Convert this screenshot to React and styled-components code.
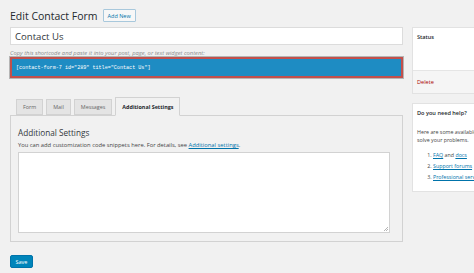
import styled, { createGlobalStyle } from 'styled-components';

const GlobalStyle = createGlobalStyle`
	html, body {
		margin: 0;
		padding: 0;
		background: #f1f1f1;
		overflow: hidden;
	}
	body {
		font-family: 'Open Sans', 'Noto Sans', sans-serif;
		color: #23282d;
	}
`;

const tabs = ['Form', 'Mail', 'Messages', 'Additional Settings'];

const App = () => {
	return (
		<Page>
			<GlobalStyle />
			<Header>
				<Title>Edit Contact Form</Title>
				<AddNew>Add New</AddNew>
			</Header>
			<Columns>
				<Main>
					<TitleInput>Contact Us</TitleInput>
					<Hint>Copy this shortcode and paste it into your post, page, or text widget content:</Hint>
					<Shortcode>[contact-form-7 id="289" title="Contact Us"]</Shortcode>
					<TabBar>
						{tabs.map((t, i) => (
							<Tab key={t} $active={i === tabs.length - 1}>{t}</Tab>
						))}
					</TabBar>
					<Panel>
						<PanelTitle>Additional Settings</PanelTitle>
						<PanelText>
							You can add customization code snippets here. For details, see <Link>Additional settings</Link>.
						</PanelText>
						<TextArea>
							<Grip />
						</TextArea>
					</Panel>
				</Main>
				<Side>
					<StatusBox>
						<BoxHead>Status</BoxHead>
						<BoxFoot>
							<Delete>Delete</Delete>
						</BoxFoot>
					</StatusBox>
					<HelpBox>
						<BoxHead>Do you need help?</BoxHead>
						<HelpText>Here are some available options to help solve your problems.</HelpText>
						<HelpList>
							<li><Link>FAQ</Link> and <Link>docs</Link></li>
							<li><Link>Support forums</Link></li>
							<li><Link>Professional services</Link></li>
						</HelpList>
					</HelpBox>
				</Side>
			</Columns>
			<SaveBtn>Save</SaveBtn>
		</Page>
	);
};

export default App;

const Page = styled.div`
	display: flex;
	flex-direction: column;
	width: 474px;
	height: 273px;
	padding: 8px 0 0 10px;
	box-sizing: border-box;
	overflow: hidden;
`;

const Header = styled.div`
	display: flex;
	align-items: center;
	gap: 5px;
	height: 15px;
`;

const Title = styled.h1`
	margin: 0;
	font-size: 10.5px;
	font-weight: 400;
	color: #23282d;
	white-space: nowrap;
`;

const AddNew = styled.span`
	display: inline-flex;
	align-items: center;
	height: 13px;
	box-sizing: border-box;
	padding: 0 4px;
	border: 1px solid #a8c8dc;
	border-radius: 1px;
	background: #f7f7f7;
	color: #0073aa;
	font-size: 5.5px;
`;

const Columns = styled.div`
	display: grid;
	grid-template-columns: 393px 160px;
	column-gap: 9px;
	margin-top: 4px;
`;

const Main = styled.div`
	display: flex;
	flex-direction: column;
`;

const TitleInput = styled.div`
	height: 18px;
	box-sizing: border-box;
	padding: 0 4px;
	display: flex;
	align-items: center;
	background: #fff;
	border: 1px solid #dcdcdc;
	font-size: 9.6px;
	color: #32373c;
`;

const Hint = styled.p`
	margin: 5px 0 0;
	height: 7px;
	line-height: 7px;
	font-size: 5.8px;
	font-style: italic;
	color: #8a8a8a;
	white-space: nowrap;
`;

const Shortcode = styled.div`
	height: 21px;
	box-sizing: border-box;
	display: flex;
	align-items: center;
	padding-left: 4px;
	background: #1e8cc3;
	border: 2px solid #c2504c;
	box-shadow: 0 0 0 1px #b5b5b5;
	color: #fff;
	font-family: 'Liberation Mono', monospace;
	font-size: 5.1px;
	white-space: nowrap;
`;

const TabBar = styled.div`
	display: flex;
	align-items: flex-end;
	gap: 3px;
	margin-top: 19px;
	padding-left: 6px;
	height: 18px;
	position: relative;
	z-index: 1;
`;

const Tab = styled.div`
	display: flex;
	align-items: center;
	padding: 0 6px;
	height: ${(p) => (p.$active ? '19px' : '16px')};
	box-sizing: border-box;
	margin-bottom: ${(p) => (p.$active ? '-1px' : '0')};
	background: ${(p) => (p.$active ? '#f1f1f1' : '#e4e4e4')};
	border: 1px solid #d2d2d2;
	border-bottom: ${(p) => (p.$active ? '1px solid #f1f1f1' : '1px solid #d2d2d2')};
	font-size: 5.4px;
	font-weight: ${(p) => (p.$active ? 700 : 400)};
	color: ${(p) => (p.$active ? '#23282d' : '#666')};
	white-space: nowrap;
`;

const Panel = styled.div`
	display: flex;
	flex-direction: column;
	height: 127px;
	box-sizing: border-box;
	padding: 11px 12px 8px 7px;
	border: 1px solid #d2d2d2;
	background: #f1f1f1;
`;

const PanelTitle = styled.h2`
	margin: 0;
	font-size: 8.2px;
	font-weight: 400;
	line-height: 12px;
	color: #32373c;
`;

const PanelText = styled.p`
	margin: 3px 0 0;
	font-size: 5.8px;
	line-height: 7px;
	color: #444;
	white-space: nowrap;
`;

const Link = styled.span`
	color: #0073aa;
	text-decoration: underline;
`;

const TextArea = styled.div`
	flex: 1;
	margin-top: 3px;
	background: #fff;
	border: 1px solid #d2d2d2;
	position: relative;
`;

const Grip = styled.div`
	position: absolute;
	right: 1px;
	bottom: 1px;
	width: 4px;
	height: 4px;
	background: linear-gradient(135deg, transparent 50%, #b5b5b5 50%, #b5b5b5 60%, transparent 60%, transparent 75%, #b5b5b5 75%, #b5b5b5 85%, transparent 85%);
`;

const Side = styled.div`
	display: flex;
	flex-direction: column;
	gap: 9px;
`;

const Box = styled.div`
	background: #fff;
	border: 1px solid #e2e2e2;
	display: flex;
	flex-direction: column;
`;

const StatusBox = styled(Box)`
	height: 67px;
	box-sizing: border-box;
`;

const BoxHead = styled.div`
	padding: 5px 4px 0;
	font-size: 5.6px;
	font-weight: 600;
	color: #23282d;
`;

const BoxFoot = styled.div`
	margin-top: auto;
	height: 23px;
	box-sizing: border-box;
	border-top: 1px solid #e5e5e5;
	background: #f5f5f5;
	display: flex;
	align-items: center;
	padding: 0 4px;
`;

const Delete = styled.span`
	font-size: 5.6px;
	color: #a00;
`;

const HelpBox = styled(Box)`
	height: 89px;
	box-sizing: border-box;
`;

const HelpText = styled.p`
	margin: 11px 0 0;
	padding: 0 4px;
	font-size: 5.3px;
	line-height: 8px;
	color: #444;
	width: 110px;
`;

const HelpList = styled.ol`
	margin: 6px 0 0;
	padding: 0 0 0 20px;
	font-size: 5.3px;
	line-height: 11px;
	color: #444;
	white-space: nowrap;
`;

const SaveBtn = styled.div`
	display: flex;
	align-items: center;
	justify-content: center;
	width: 23px;
	height: 13px;
	margin-top: 13px;
	background: #0085ba;
	border: 1px solid #0073aa;
	box-sizing: border-box;
	border-radius: 2px;
	color: #fff;
	font-size: 5.5px;
`;
